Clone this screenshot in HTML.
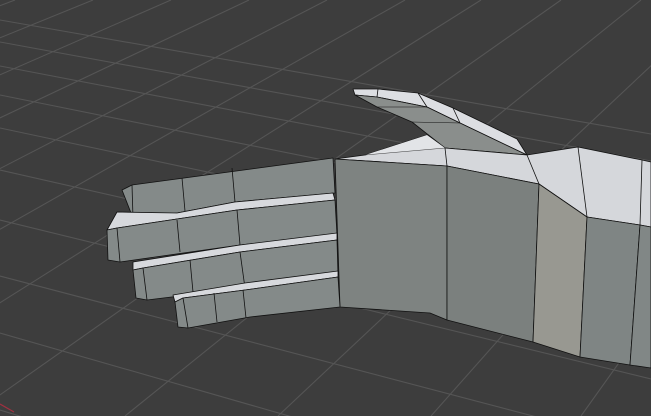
<!DOCTYPE html>
<html><head><style>html,body{margin:0;padding:0;background:#3d3d3d;width:651px;height:416px;overflow:hidden}svg{display:block}</style></head>
<body>
<svg width="651" height="416" viewBox="0 0 651 416" xmlns="http://www.w3.org/2000/svg">
<rect width="651" height="416" fill="#3d3d3d"/>
<g stroke="#555" stroke-width="1.1">
<line x1="0" y1="20" x2="651" y2="134"/>
<line x1="0" y1="42" x2="651" y2="161"/>
<line x1="0" y1="66" x2="651" y2="190"/>
<line x1="0" y1="95" x2="651" y2="226"/>
<line x1="0" y1="128" x2="651" y2="266"/>
<line x1="0" y1="170" x2="651" y2="318"/>
<line x1="0" y1="220" x2="651" y2="379"/>
<line x1="0" y1="276" x2="651" y2="447"/>
<line x1="0" y1="333" x2="651" y2="520"/>
<line x1="0" y1="410" x2="651" y2="610"/>
<line x1="-30" y1="416" x2="561" y2="0"/>
<line x1="125" y1="416" x2="641" y2="0"/>
<line x1="278" y1="416" x2="721" y2="0"/>
<line x1="431" y1="416" x2="800" y2="0"/>
<line x1="581" y1="416" x2="878" y2="0"/>
<line x1="735" y1="416" x2="958" y2="0"/>
<line x1="-180" y1="416" x2="481" y2="0"/>
<line x1="-330" y1="416" x2="405" y2="0"/>
<line x1="-480" y1="416" x2="327" y2="0"/>
<line x1="-630" y1="416" x2="249" y2="0"/>
<line x1="-780" y1="416" x2="171" y2="0"/>
<line x1="-930" y1="416" x2="93" y2="0"/>
<line x1="-1080" y1="416" x2="15" y2="0"/>
</g>
<line x1="0" y1="404" x2="14" y2="412" stroke="#a03040" stroke-width="1.2"/>
<g stroke="#111" stroke-width="0.8" stroke-linejoin="round">
<!-- thumb -->
<polygon points="353,89 378,89 418,93 453,108 517,139 527,155 460,123 427,107 377,97 355,95" fill="#dcdee2"/>
<polygon points="355,95 377,97 427,107 460,123 527,155 445,148 412,122 377,107" fill="#8a8e8c"/>
<line x1="378" y1="89" x2="377" y2="97"/>
<line x1="418" y1="93" x2="427" y2="107"/>
<line x1="453" y1="108" x2="460" y2="123"/>
<line x1="377" y1="107" x2="427" y2="107" stroke-width="0.5"/>
<line x1="412" y1="122" x2="460" y2="123" stroke-width="0.5"/>
<!-- top surface of hand -->
<polygon points="335,159 365,155 427,135 445,148 527,155 578,147 642,160 651,162 651,227 640,225 587,217 539,184 447,166" fill="#d5d7db"/>
<polygon points="365,155 427,135 445,148" fill="#e2e4e7" stroke="none"/>
<line x1="445" y1="148" x2="447" y2="166"/>
<line x1="527" y1="155" x2="539" y2="184"/>
<line x1="578" y1="147" x2="587" y2="217"/>
<line x1="642" y1="160" x2="640" y2="225"/>
<line x1="365" y1="155" x2="445" y2="148" stroke-width="0.4"/>
<!-- palm sides -->
<polygon points="335,159 447,166 447,320 430,313 340,307" fill="#7e8381"/>
<polygon points="447,166 539,184 533,342 447,320" fill="#7b807e"/>
<polygon points="539,184 587,217 580,357 533,342" fill="#989891"/>
<polygon points="587,217 640,225 630,365 580,357" fill="#7f8584"/>
<polygon points="640,225 651,227 651,368 630,365" fill="#818786"/>
<!-- finger 1 -->
<polygon points="122,190 132,185 333,158 335,193 235,202 177,213 133,218" fill="#848a89"/>
<line x1="132" y1="185" x2="133" y2="218"/>
<line x1="182" y1="178" x2="185" y2="211"/>
<line x1="232" y1="168" x2="235" y2="202"/>
<!-- finger 2 -->
<polygon points="107,230 117,212 177,213 235,202 333,193 335,200 237,210 117,228" fill="#d7d9dd"/>
<polygon points="107,230 117,228 237,210 335,200 337,235 240,245 120,262 108,260" fill="#848a89"/>
<line x1="117" y1="228" x2="120" y2="262"/>
<line x1="177" y1="220" x2="180" y2="252"/>
<line x1="237" y1="210" x2="240" y2="245"/>
<!-- finger 3 -->
<polygon points="133,262 240,245 337,233 337,240 240,252 143,268 133,270" fill="#d7d9dd"/>
<polygon points="133,270 143,268 240,252 337,240 338,275 245,288 147,300 136,298" fill="#848a89"/>
<line x1="143" y1="268" x2="147" y2="300"/>
<line x1="190" y1="260" x2="193" y2="292"/>
<line x1="240" y1="252" x2="245" y2="288"/>
<!-- finger 4 -->
<polygon points="173,295 245,283 338,271 338,277 245,290 183,298 175,302" fill="#d7d9dd"/>
<polygon points="175,302 183,298 245,290 338,277 340,307 250,317 188,328 178,327" fill="#848a89"/>
<line x1="183" y1="298" x2="188" y2="328"/>
<line x1="214" y1="293" x2="217" y2="322"/>
<line x1="243" y1="290" x2="246" y2="318"/>
</g>
</svg>
</body></html>
